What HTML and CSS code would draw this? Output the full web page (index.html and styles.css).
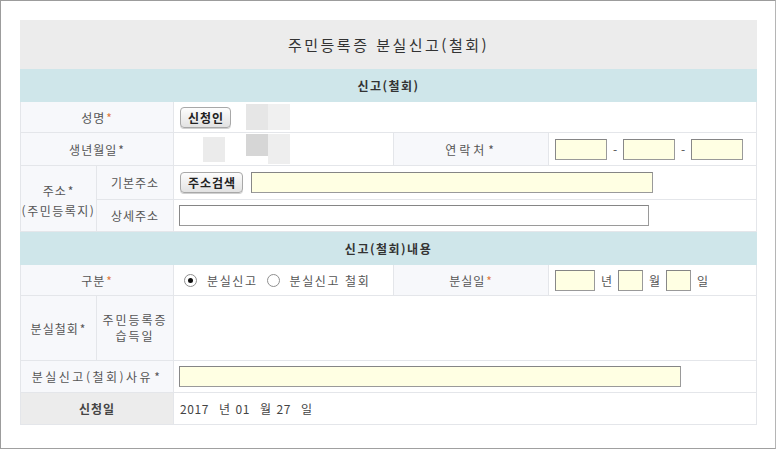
FILE: index.html
```html
<!DOCTYPE html>
<html lang="ko">
<head>
<meta charset="utf-8">
<title>주민등록증 분실신고(철회)</title>
<link rel="stylesheet" href="styles.css">
</head>
<body>
<div class="frame">
  <table class="form">
    <colgroup>
      <col class="c1"><col class="c2"><col class="c3"><col class="c4"><col class="c5">
    </colgroup>
    <tr class="r-title"><th colspan="5" class="title">주민등록증 분실신고(철회)</th></tr>
    <tr class="r-sec"><th colspan="5" class="sec">신고(철회)</th></tr>
    <tr class="r31">
      <th colspan="2" class="lbl">성명<span class="req">*</span></th>
      <td colspan="3" class="val">
        <div class="line">
          <button class="btn" type="button">신청인</button>
          <div class="mosaic m1"><i class="q a"></i><i class="q b"></i></div>
        </div>
      </td>
    </tr>
    <tr class="r33">
      <th colspan="2" class="lbl">생년월일<span class="req dk">*</span></th>
      <td class="val">
        <div class="line m2wrap">
          <div class="mosaic m2"><i class="q c"></i></div>
          <div class="mosaic m3"><i class="q d"></i><i class="q e"></i></div>
        </div>
      </td>
      <th class="lbl wide2">연락처<span class="req dk">*</span></th>
      <td class="val">
        <div class="line phone">
          <span class="inp y w51"></span><span class="dash">-</span><span class="inp y w51"></span><span class="dash">-</span><span class="inp y w51"></span>
        </div>
      </td>
    </tr>
    <tr class="r35">
      <th rowspan="2" class="lbl addr">주소<span class="req dk">*</span><br><span class="wide">(주민등록지)</span></th>
      <th class="lbl sub">기본주소</th>
      <td colspan="3" class="val">
        <div class="line">
          <button class="btn" type="button">주소검색</button>
          <span class="inp y w402 ml8"></span>
        </div>
      </td>
    </tr>
    <tr class="r32">
      <th class="lbl sub">상세주소</th>
      <td colspan="3" class="val">
        <div class="line"><span class="inp w w469"></span></div>
      </td>
    </tr>
    <tr class="r-sec"><th colspan="5" class="sec">신고(철회)내용</th></tr>
    <tr class="r31">
      <th colspan="2" class="lbl">구분<span class="req">*</span></th>
      <td class="val">
        <div class="line radios">
          <span class="radio on"></span><span class="rtxt">분실신고</span>
          <span class="radio"></span><span class="rtxt">분실신고 철회</span>
        </div>
      </td>
      <th class="lbl">분실일<span class="req">*</span></th>
      <td class="val">
        <div class="line date">
          <span class="inp y w40"></span><span class="unit">년</span><span class="inp y w25"></span><span class="unit">월</span><span class="inp y w25"></span><span class="unit">일</span>
        </div>
      </td>
    </tr>
    <tr class="r65">
      <th class="lbl">분실철회<span class="req dk">*</span></th>
      <th class="lbl sub two">주민등록증<br>습득일</th>
      <td colspan="3" class="val"></td>
    </tr>
    <tr class="r32">
      <th colspan="2" class="lbl wide3">분실신고(철회)사유<span class="req dk">*</span></th>
      <td colspan="3" class="val">
        <div class="line"><span class="inp y w502"></span></div>
      </td>
    </tr>
    <tr class="r32 last">
      <th colspan="2" class="lbl gray">신청일</th>
      <td colspan="3" class="val date-text">2017 &nbsp;년 01 &nbsp;월 27 &nbsp;일</td>
    </tr>
  </table>
</div>
</body>
</html>
```
FILE: styles.css
```css
html, body {
  margin: 0;
  padding: 0;
  background: #fff;
}
body {
  font-family: "Noto Sans CJK KR", "Noto Sans", sans-serif;
  font-size: 12px;
  color: #555;
}
.frame {
  box-sizing: border-box;
  width: 776px;
  height: 449px;
  border: 1px solid #9c9c9c;
  border-right-color: #b5b5b5;
  border-bottom-color: #a0a0a0;
  padding: 19px 0 0 19px;
}
.form {
  border-collapse: collapse;
  table-layout: fixed;
  width: 736px;
}
.c1 { width: 76px; }
.c2 { width: 77px; }
.c3 { width: 220px; }
.c4 { width: 155px; }
.c5 { width: 208px; }

.form th, .form td {
  padding: 0;
  border: 1px solid #e4e6ea;
  font-weight: normal;
  line-height: 15px;
  letter-spacing: 1px;
}
.title {
  height: 47px;
  background: #ececec;
  border-color: #ececec !important;
  font-size: 15px;
  color: #333;
  letter-spacing: 2.5px !important;
  text-align: center;
}
.sec {
  height: 32px;
  background: #cfe6ea;
  border-color: #cfe6ea !important;
  color: #333;
  font-weight: bold !important;
  font-size: 12px;
  letter-spacing: 1.5px !important;
  text-align: center;
}
.r31 > * { height: 30px; }
.r32 > * { height: 31px; }
.r33 > * { height: 32px; }
.r35 > * { height: 33px; }
.r65 > * { height: 64px; }

.lbl {
  background: #f7f8fb;
  color: #555;
  text-align: center;
}
.lbl.wide2 { letter-spacing: 3px; }
.lbl.wide3 { letter-spacing: 2.5px; }
.lbl.addr { line-height: 20px; padding-top: 4px; }
.lbl.addr .wide { margin-left: -10px; margin-right: -10px; display: inline-block; letter-spacing: 1.5px; }
.lbl.sub { text-align: center; }
.lbl.two { line-height: 16px; letter-spacing: 2px; }
.lbl.gray {
  background: #ececec;
  font-weight: bold;
  color: #444;
}
.req { color: #e07a40; margin-left: 1px; }
.req.dk { color: #555; }

.val {
  background: #fff;
  padding-left: 5px !important;
}
.line {
  display: flex;
  align-items: center;
}
.btn {
  box-sizing: border-box;
  height: 21px;
  padding: 0 6px 0 7px;
  border: 1px solid #a8a8a8;
  border-radius: 4px;
  background: linear-gradient(#fdfdfd, #e2e2e2);
  box-shadow: 0 1px 0 #d0d0d0;
  font-family: "Noto Sans CJK KR", sans-serif;
  font-size: 12px;
  font-weight: bold;
  color: #222;
  line-height: 17px;
  letter-spacing: 1px;
  margin-left: 1px;
}
.inp {
  display: inline-block;
  box-sizing: border-box;
  height: 21px;
  border: 1px solid #9a9a9a;
  border-top-color: #858585;
  border-left-color: #888;
  background: #fff;
}
.inp.y { background: #ffffe3; }
.w51 { width: 52px; }
.w40 { width: 40px; }
.w25 { width: 25px; }
.w402 { width: 402px; }
.w469 { width: 470px; }
.w502 { width: 502px; }
.ml8 { margin-left: 8px; }
.phone { padding-left: 1px; }
.dash { width: 16px; text-align: center; color: #555; letter-spacing: 0; }

.radios { padding-left: 5px; }
.radio {
  box-sizing: border-box;
  width: 13px;
  height: 13px;
  border: 1px solid #8f8f8f;
  border-radius: 50%;
  background: #fff;
  display: inline-flex;
  align-items: center;
  justify-content: center;
}
.radio.on::after {
  content: "";
  width: 5px;
  height: 5px;
  border-radius: 50%;
  background: #111;
}
.rtxt { margin: 0 9px 0 10px; color: #555; letter-spacing: 1.6px; }

.date { padding-left: 1px; }
.unit { margin: 0 6px; color: #555; letter-spacing: 0; }

.date-text {
  color: #444;
  font-size: 12px;
  padding-left: 6px !important;
  letter-spacing: 0.6px !important;
  word-spacing: 1px;
}

.mosaic { display: flex; }
.q { display: block; }
.m1 { margin-left: 15px; }
.m1 .a { width: 22px; height: 26px; background: #e6e6e6; }
.m1 .b { width: 22px; height: 26px; background: #f0f0f0; }
.m2wrap { padding-left: 24px; }
.m2 .c { width: 22px; height: 25px; background: #ebebeb; }
.m3 { margin-left: 21px; }
.m3 .d { width: 22px; height: 22px; background: #d6d6d6; }
.m3 .e { width: 22px; height: 30px; background: #eeeeee; }
```
